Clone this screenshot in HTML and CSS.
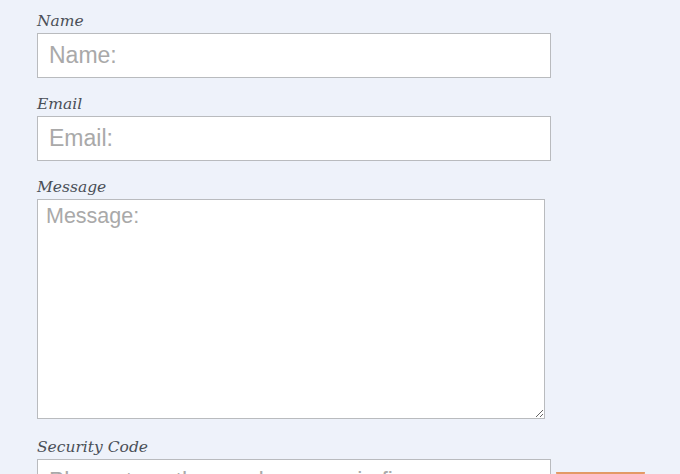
FILE: index.html
```html
<!DOCTYPE html>
<html>
<head>
<meta charset="utf-8">
<link rel="stylesheet" href="styles.css">
</head>
<body>
<form class="contact">
  <label class="lbl lbl-first" for="name">Name</label>
  <input class="field" id="name" type="text" placeholder="Name:">
  <label class="lbl" for="email">Email</label>
  <input class="field" id="email" type="text" placeholder="Email:">
  <label class="lbl" for="msg">Message</label>
  <textarea class="area" id="msg" placeholder="Message:"></textarea>
  <label class="lbl lbl-sec" for="code">Security Code</label>
  <div class="code-row">
    <input class="field" id="code" type="text" placeholder="Please type the word you see in figure">
    <button class="btn" type="button"></button>
  </div>
</form>
</body>
</html>
```
FILE: styles.css
```css
html, body {
  margin: 0;
  padding: 0;
  background: #eef2fa;
  overflow: hidden;
}
.contact {
  padding: 11px 0 0 37px;
  display: flex;
  flex-direction: column;
  align-items: flex-start;
}
.lbl {
  display: block;
  font-family: "DejaVu Serif", serif;
  font-style: italic;
  font-size: 15.5px;
  line-height: 20px;
  color: #4a4f57;
  margin: 16px 0 2px;
}
.lbl-first { margin-top: 0; }
.lbl-sec { margin-top: 18px; }
.field {
  box-sizing: border-box;
  width: 514px;
  height: 45px;
  margin: 0;
  padding: 0 11px;
  border: 1px solid #b9bbbe;
  border-radius: 0;
  background: #fff;
  font-family: "Liberation Sans", Arial, sans-serif;
  font-size: 23px;
  color: #333;
  outline: none;
}
.field::placeholder { color: #a9a9a9; }
.area {
  box-sizing: border-box;
  display: block;
  width: 508px;
  height: 220px;
  margin: 0;
  padding: 3px 8px;
  border: 1px solid #b9bbbe;
  background: #fff;
  font-family: "Liberation Sans", Arial, sans-serif;
  font-size: 21.5px;
  line-height: 26px;
  color: #333;
  outline: none;
}
.area::placeholder { color: #a9a9a9; }
.code-row {
  display: flex;
  align-items: flex-start;
  gap: 5px;
}
.btn {
  width: 89px;
  height: 30px;
  margin-top: 13px;
  padding: 0;
  border: 1px solid #e7b088;
  border-top: 2px solid #e39a66;
  background: #f7dcc6;
}
```
